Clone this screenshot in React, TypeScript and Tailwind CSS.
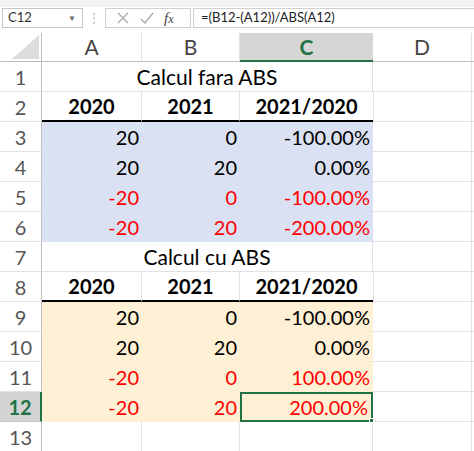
import React from 'react';

const gridLine = 'border-[#e1e1e1]';
const font = "font-['Lato','Open_Sans',sans-serif]";

type Cell = { text?: string; bold?: boolean; red?: boolean; align?: 'left' | 'center' | 'right' };

const blue = 'bg-[#d9e1f2]';
const gold = 'bg-[#fdf0d4]';

const blockA: Cell[][] = [
  [{ text: '20' }, { text: '0' }, { text: '-100.00%' }],
  [{ text: '20' }, { text: '20' }, { text: '0.00%' }],
  [{ text: '-20', red: true }, { text: '0', red: true }, { text: '-100.00%', red: true }],
  [{ text: '-20', red: true }, { text: '20', red: true }, { text: '-200.00%', red: true }],
];

const blockB: Cell[][] = [
  [{ text: '20' }, { text: '0' }, { text: '-100.00%' }],
  [{ text: '20' }, { text: '20' }, { text: '0.00%' }],
  [{ text: '-20', red: true }, { text: '0', red: true }, { text: '100.00%', red: true }],
  [{ text: '-20', red: true }, { text: '20', red: true }, { text: '200.00%', red: true }],
];

const widths = ['w-[100px]', 'w-[98px]', 'w-[133px]'];

function RowHead({ n, active }: { n: number; active?: boolean }) {
  return (
    <div
      className={
        active
          ? 'w-[42px] h-[30px] shrink-0 flex items-center justify-center bg-[#d3d3d3] border-b border-[#c8c8c8] border-r-2 border-r-[#217346] text-[#217346] font-bold text-[20px]'
          : `w-[42px] h-[30px] shrink-0 flex items-center justify-center bg-white border-b ${gridLine} border-r border-r-[#bdbdbd] text-[#555] text-[20px]`
      }
    >
      {n}
    </div>
  );
}

function DCell() {
  return <div className={`w-[99px] h-[30px] shrink-0 border-r border-b ${gridLine}`} />;
}

function Rest() {
  return <div className={`flex-1 h-[30px] border-b ${gridLine}`} />;
}

function DataRow({ n, cells, fill, active }: { n: number; cells: Cell[]; fill: string; active?: boolean }) {
  return (
    <div className="flex">
      <RowHead n={n} active={active} />
      {cells.map((c, i) => {
        const sel = active && i === 2;
        return (
          <div
            key={i}
            className={`${widths[i]} h-[30px] shrink-0 relative flex items-center justify-end pr-[3px] text-[20px] ${fill} ${
              c.red ? 'text-[#ff0000]' : 'text-black'
            } ${sel ? 'border-2 border-[#217346]' : ''}`}
          >
            {c.text}
            {sel && <span className="absolute -right-[3px] -bottom-[3px] w-[5px] h-[5px] bg-[#217346] border border-white" />}
          </div>
        );
      })}
      <DCell />
      <Rest />
    </div>
  );
}

function TitleRow({ n, text }: { n: number; text: string }) {
  return (
    <div className="flex">
      <RowHead n={n} />
      <div className={`w-[331px] h-[30px] shrink-0 flex items-center justify-center text-[21px] text-black border-r border-b ${gridLine}`}>
        {text}
      </div>
      <DCell />
      <Rest />
    </div>
  );
}

function YearRow({ n }: { n: number }) {
  const labels = ['2020', '2021', '2021/2020'];
  return (
    <div className="flex">
      <RowHead n={n} />
      {labels.map((l, i) => (
        <div
          key={l}
          className={`${widths[i]} h-[30px] shrink-0 flex items-center justify-center font-bold text-[20px] text-black border-b-2 border-b-black ${
            i < 2 ? `border-r ${gridLine}` : ''
          }`}
        >
          {l}
        </div>
      ))}
      <div className={`w-[99px] h-[30px] shrink-0 border-r border-b border-l ${gridLine}`} />
      <Rest />
    </div>
  );
}

export default function App() {
  return (
    <div className={`w-[474px] h-[451px] overflow-hidden bg-white ${font}`}>
      {/* formula bar */}
      <div className="h-[7px] bg-[#f3f3f3]" />
      <div className="h-[26px] flex items-start pt-[1px]">
        <div className="ml-[2px] w-[81px] h-[20px] border border-[#c6c6c6] flex items-center pl-[5px] pr-[6px] text-[13px] text-[#333]">
          <span className="flex-1">C12</span>
          <span className="text-[8px] text-[#666]">▼</span>
        </div>
        <div className="w-[22px] h-[20px] flex items-center justify-center text-[#bbb] text-[12px]">⋮</div>
        <div className="w-[86px] h-[20px] border border-[#d0d0d0] flex items-center">
          <svg width="16" height="16" viewBox="0 0 16 16" className="ml-[9px]">
            <path d="M3 3 L13 13 M13 3 L3 13" stroke="#a8a8a8" strokeWidth="1.3" />
          </svg>
          <svg width="16" height="16" viewBox="0 0 16 16" className="ml-[8px]">
            <path d="M2 9 L6 13 L14 3" stroke="#a8a8a8" strokeWidth="1.3" fill="none" />
          </svg>
          <span className="ml-[9px] italic font-['Liberation_Serif',serif] text-[15px] text-[#444]">
            f<span className="text-[12px]">x</span>
          </span>
        </div>
        <div className="ml-[2px] flex-1 h-[20px] border border-r-0 border-[#d0d0d0] flex items-center pl-[7px] text-[13px] text-[#222]">
          =(B12-(A12))/ABS(A12)
        </div>
      </div>
      {/* column headers */}
      <div className="flex h-[29px]">
        <div className="w-[42px] h-[29px] shrink-0 relative border-r border-b border-[#bdbdbd] bg-white">
          <svg width="27" height="24" viewBox="0 0 27 24" className="absolute right-[2px] bottom-[2px]">
            <path d="M27 0 L27 24 L0 24 Z" fill="#dcdcdc" />
          </svg>
        </div>
        <div className={`w-[100px] shrink-0 flex items-center justify-center text-[21px] text-[#444] border-r border-b ${gridLine} border-b-[#bdbdbd]`}>A</div>
        <div className={`w-[98px] shrink-0 flex items-center justify-center text-[21px] text-[#444] border-r border-b ${gridLine} border-b-[#bdbdbd]`}>B</div>
        <div className="w-[133px] shrink-0 flex items-center justify-center text-[21px] font-bold text-[#217346] bg-[#d6d6d6] border-b-2 border-b-[#217346]">C</div>
        <div className={`w-[99px] shrink-0 flex items-center justify-center text-[21px] text-[#444] border-r border-b ${gridLine} border-b-[#bdbdbd]`}>D</div>
        <div className="flex-1 border-b border-[#bdbdbd]" />
      </div>
      <TitleRow n={1} text="Calcul fara ABS" />
      <YearRow n={2} />
      {blockA.map((r, i) => (
        <DataRow key={i} n={3 + i} cells={r} fill={blue} />
      ))}
      <TitleRow n={7} text="Calcul cu ABS" />
      <YearRow n={8} />
      {blockB.map((r, i) => (
        <DataRow key={i} n={9 + i} cells={r} fill={gold} active={i === 3} />
      ))}
      <div className="flex">
        <RowHead n={13} />
        <div className={`w-[100px] h-[30px] shrink-0 border-r border-b ${gridLine}`} />
        <div className={`w-[98px] h-[30px] shrink-0 border-r border-b ${gridLine}`} />
        <div className={`w-[133px] h-[30px] shrink-0 border-r border-b ${gridLine}`} />
        <DCell />
        <Rest />
      </div>
    </div>
  );
}
